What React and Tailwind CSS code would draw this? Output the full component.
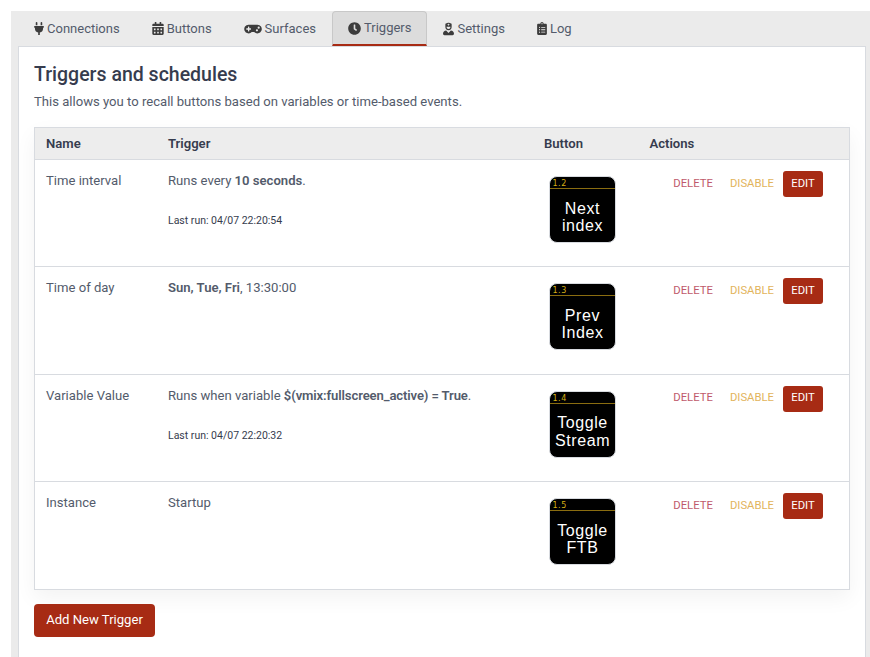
import React from 'react';
import { FaPlug, FaCalendarAlt, FaGamepad, FaClock, FaUserNurse, FaClipboardList } from 'react-icons/fa';

const tabs = [
  { label: 'Connections', icon: <FaPlug className="w-[10px] h-[13px]" /> },
  { label: 'Buttons', icon: <FaCalendarAlt className="w-[12px] h-[13px]" /> },
  { label: 'Surfaces', icon: <FaGamepad className="w-[18px] h-[14px]" /> },
  { label: 'Triggers', icon: <FaClock className="w-[13px] h-[13px]" />, active: true },
  { label: 'Settings', icon: <FaUserNurse className="w-[11px] h-[14px]" /> },
  { label: 'Log', icon: <FaClipboardList className="w-[10px] h-[13px]" /> },
];

const rows = [
  {
    name: 'Time interval',
    trigger: <>Runs every <b className="font-semibold">10 seconds</b>.</>,
    lastRun: 'Last run: 04/07 22:20:54',
    bank: '1.2',
    lines: ['Next', 'index'],
  },
  {
    name: 'Time of day',
    trigger: <><b className="font-semibold">Sun, Tue, Fri</b>, 13:30:00</>,
    bank: '1.3',
    lines: ['Prev', 'Index'],
  },
  {
    name: 'Variable Value',
    trigger: <>Runs when variable <b className="font-semibold tracking-[-0.12px]">$(vmix:fullscreen_active) = True</b>.</>,
    lastRun: 'Last run: 04/07 22:20:32',
    bank: '1.4',
    lines: ['Toggle', 'Stream'],
  },
  {
    name: 'Instance',
    trigger: 'Startup',
    bank: '1.5',
    lines: ['Toggle', 'FTB'],
  },
];

const BankPreview = ({ bank, lines }) => (
  <div className="w-[67px] h-[67px] bg-black rounded-lg border border-[#d8dbe0] flex flex-col overflow-hidden">
    <div className="h-[12px] border-b border-[#8a6d10] text-[#d4ae14] text-[8px] leading-[13px] pl-[3px] tracking-[0.5px] font-['DejaVu_Sans',sans-serif]">
      {bank}
    </div>
    <div className="flex-1 flex flex-col items-center justify-center pt-[3px] pl-[1px] text-white text-[16px] leading-[17.5px] tracking-[0.6px] font-['Liberation_Sans',sans-serif]">
      {lines.map((line) => (
        <span key={line}>{line}</span>
      ))}
    </div>
  </div>
);

const App = () => {
  return (
    <div className="h-[657px] overflow-hidden bg-white pt-[11px] pl-[11px] font-['Roboto',sans-serif] text-[13.1px] text-[#535b6b]">
      <div className="bg-[#ebebeb] h-[646px] pl-[7px] pr-[4px]">
        {/* Tabs */}
        <nav className="flex h-[35px] text-[13px]">
          {tabs.map((tab) => (
            <a
              key={tab.label}
              className={
                tab.active
                  ? 'flex items-center gap-[3px] px-[15px] bg-[#dcdcdc] border border-[#c8c8c8] border-b-2 border-b-[#a72b14] rounded-t-[4px] text-[#535b6b]'
                  : 'flex items-center gap-[3px] px-[16px] text-[#535b6b]'
              }
            >
              <span className="text-[#3c3c3c]">{tab.icon}</span>
              {tab.label}
            </a>
          ))}
        </nav>

        {/* Card */}
        <main className="bg-white border border-[#d8dbe0] border-b-0 h-[611px] px-[15px] pt-[15px]">
          <h4 className="text-[19.5px] leading-[25px] font-medium text-[#363c4e] mb-[4px]">Triggers and schedules</h4>
          <p className="leading-[21px] mb-[15px]">
            This allows you to recall buttons based on variables or time-based events.
          </p>

          <table className="w-[816px] table-fixed border-collapse shadow-[0_8px_20px_rgba(0,0,21,0.05)]">
            <thead>
              <tr className="h-[32px] bg-[#ededed] border border-[#d8dbe0]">
                <th className="w-[122px] pl-[11px] text-left font-semibold text-[#363c4e]">Name</th>
                <th className="w-[376px] pl-[11.5px] text-left font-semibold text-[#363c4e]">Trigger</th>
                <th className="w-[105px] pl-[11.5px] text-left font-semibold text-[#363c4e]">Button</th>
                <th className="pl-[12px] text-left font-semibold text-[#363c4e]">Actions</th>
              </tr>
            </thead>
            <tbody>
              {rows.map((row) => (
                <tr key={row.name} className="h-[107.4px] border border-[#d8dbe0] align-top">
                  <td className="pl-[11px] pt-[10px] leading-[21px]">{row.name}</td>
                  <td className="pl-[11.5px] pt-[10px] leading-[21px]">
                    <div>{row.trigger}</div>
                    {row.lastRun && (
                      <div className="mt-[19px] text-[10.5px] leading-[21px] text-[#363c4e]">{row.lastRun}</div>
                    )}
                  </td>
                  <td className="pl-[16px] pt-[16px]">
                    <BankPreview bank={row.bank} lines={row.lines} />
                  </td>
                  <td className="pt-[11px]">
                    <div className="flex items-center justify-end pr-[26px] text-[11.3px]">
                      <button className="pl-[8px] pr-[9px] h-[26px] text-[#c0596b]">DELETE</button>
                      <button className="px-[8px] h-[26px] text-[#e2b45c]">DISABLE</button>
                      <button className="ml-[1px] w-[40px] h-[26px] bg-[#a72b14] text-white rounded-[3px]">EDIT</button>
                    </div>
                  </td>
                </tr>
              ))}
            </tbody>
          </table>

          <button className="mt-[14px] w-[121px] h-[33px] bg-[#a72b14] text-white rounded-[4px]">Add New Trigger</button>
        </main>
      </div>
    </div>
  );
};

export default App;
